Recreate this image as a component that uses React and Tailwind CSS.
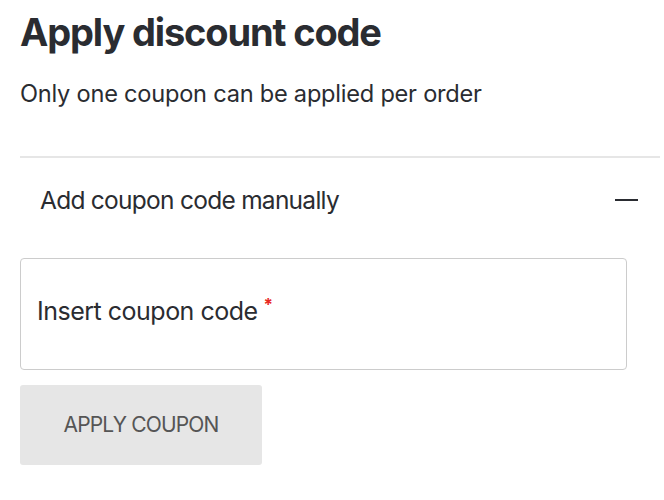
export default function App() {
  return (
    <div className="min-h-screen bg-white pl-5 pr-1 pt-[8px] font-['Inter',sans-serif] text-[#2a2c31]">
      <h1 className="text-[38px] font-bold leading-[48px] tracking-[-0.03em]">
        Apply discount code
      </h1>
      <p className="mt-[24px] text-[23.6px] leading-[28px] tracking-[-0.01em]">
        Only one coupon can be applied per order
      </p>

      <div className="mt-[48px] border-t-2 border-[#e6e6e6]">
        {/* Accordion header */}
        <div className="flex h-[84px] items-center justify-between pl-5 pr-[22px]">
          <span className="text-[24.5px] tracking-[-0.03em]">Add coupon code manually</span>
          <span className="h-[2px] w-[23px] bg-[#2a2c31]" />
        </div>

        {/* Accordion body */}
        <div className="mt-4 flex h-[112px] w-[607px] items-center rounded-[4px] border border-[#cccccc] pl-4 pb-[4px]">
          <span className="text-[25px] tracking-[-0.02em]">Insert coupon code</span>
          <span className="ml-[6px] -translate-y-[6px] text-[17px] font-bold text-[#e8281e]">*</span>
        </div>

        <button className="mt-[15px] h-[80px] w-[242px] rounded-[3px] bg-[#e6e6e6] text-[21px] uppercase tracking-[-0.04em] text-[#555555]">
          Apply coupon
        </button>
      </div>
    </div>
  );
}
